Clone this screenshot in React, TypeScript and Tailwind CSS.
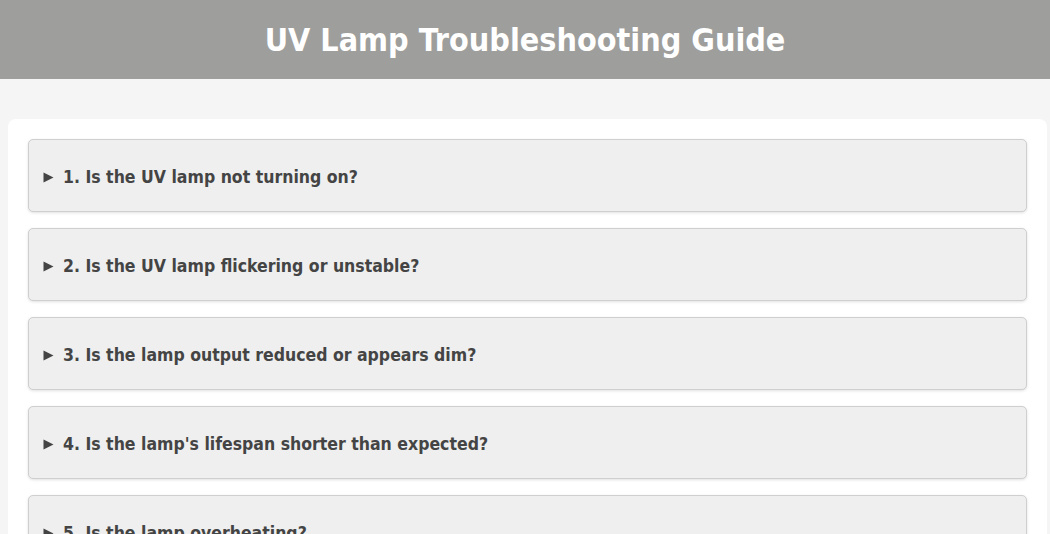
const questions = [
  "1. Is the UV lamp not turning on?",
  "2. Is the UV lamp flickering or unstable?",
  "3. Is the lamp output reduced or appears dim?",
  "4. Is the lamp's lifespan shorter than expected?",
  "5. Is the lamp overheating?",
  "6. Is there unusual noise coming from the lamp?",
];

function Item({ text }: { text: string }) {
  return (
    <div className="rounded-[5px] border border-[#cfcfcf] bg-[#efefef] shadow-[0_1px_3px_rgba(0,0,0,0.12)] px-[14px] pt-[27px] pb-[23px]">
      <div className="flex items-center gap-[9px] text-[17.5px] leading-[21px] font-bold text-[#444]">
        <svg width="11" height="11" viewBox="0 0 11 11" className="shrink-0">
          <path d="M0.5 0.5 L10.5 5.5 L0.5 10.5 Z" fill="#444" />
        </svg>
        <span>{text}</span>
      </div>
    </div>
  );
}

export default function App() {
  return (
    <div className="min-h-screen bg-[#f5f5f5] font-['DejaVu_Sans_Condensed','DejaVu_Sans',Tahoma,sans-serif]">
      <header className="h-[79px] bg-[#9e9e9c] flex items-center justify-center">
        <h1 className="text-[32px] font-bold text-white">UV Lamp Troubleshooting Guide</h1>
      </header>

      <main className="pt-10 pl-2 pr-[3px]">
        <div className="bg-white rounded-lg p-5 flex flex-col gap-4">
          {questions.map((q) => (
            <Item key={q} text={q} />
          ))}
        </div>
      </main>
    </div>
  );
}
